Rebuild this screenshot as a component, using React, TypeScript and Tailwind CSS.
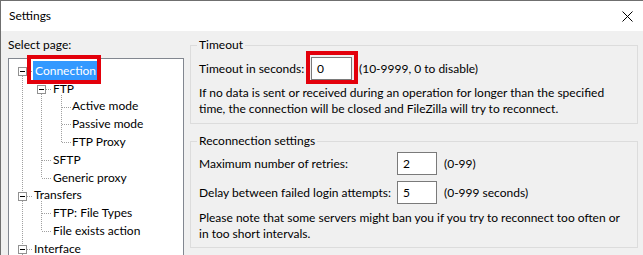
import React from "react"

type Node = { label: string; level: number; selected?: boolean }

const TREE: Node[] = [
  { label: "Connection", level: 0, selected: true },
  { label: "FTP", level: 1 },
  { label: "Active mode", level: 2 },
  { label: "Passive mode", level: 2 },
  { label: "FTP Proxy", level: 2 },
  { label: "SFTP", level: 1 },
  { label: "Generic proxy", level: 1 },
  { label: "Transfers", level: 0 },
  { label: "FTP: File Types", level: 1 },
  { label: "File exists action", level: 1 },
  { label: "Interface", level: 0 },
]

const INDENT = ["pl-[25px]", "pl-[44px]", "pl-[63px]"]

// row centre inside the tree box
const rc = (i: number) => 12 + 17.8 * i
const ry = (i: number) => Math.round(rc(i)) + 0.5

function TreeLines() {
  const dot = { stroke: "#a0a0a0", strokeDasharray: "1 1", strokeWidth: 1 }
  const vLines: [number, number, number][] = [
    [13.5, rc(0) + 5, rc(7) - 5],
    [13.5, rc(7) + 5, rc(10) - 5],
    [13.5, rc(10) + 5, 300],
    [32.5, rc(0) + 10, rc(1) - 5],
    [32.5, rc(1) + 5, rc(6)],
    [32.5, rc(7) + 5, rc(9)],
    [52.5, rc(1) + 6, rc(4)],
  ]
  const hLines: [number, number, number][] = [
    [0, 18, 24],
    [7, 18, 24],
    [10, 18, 24],
    [1, 37, 43],
    [5, 33, 43],
    [6, 33, 43],
    [8, 33, 43],
    [9, 33, 43],
    [2, 53, 62],
    [3, 53, 62],
    [4, 53, 62],
  ]
  const boxes: [number, number][] = [
    [0, 9.5],
    [7, 9.5],
    [10, 9.5],
    [1, 28.5],
  ]

  return (
    <svg
      className="pointer-events-none absolute inset-0"
      width="174"
      height="220"
      shapeRendering="crispEdges"
    >
      {vLines.map(([x, y1, y2], i) => (
        <line key={`v${i}`} x1={x} x2={x} y1={Math.round(y1)} y2={Math.round(y2)} {...dot} />
      ))}
      {hLines.map(([row, x1, x2], i) => (
        <line key={`h${i}`} x1={x1} x2={x2} y1={ry(row)} y2={ry(row)} {...dot} />
      ))}
      {boxes.map(([row, x]) => (
        <g key={`b${row}`}>
          <rect x={x} y={ry(row) - 4} width="8" height="8" fill="#fff" stroke="#919191" />
          <line x1={x + 1.5} x2={x + 6.5} y1={ry(row)} y2={ry(row)} stroke="#000" />
        </g>
      ))}
    </svg>
  )
}

function NumberBox({ value, width }: { value: string; width: string }) {
  return (
    <div className={`flex h-[23px] ${width} shrink-0 items-center border border-[#7a7a7a] bg-white pl-[5px]`}>
      {value}
    </div>
  )
}

export default function App() {
  return (
    <div className="relative h-[255px] w-[643px] overflow-hidden border-l border-t border-[#6f6f6f] bg-[#f0f0f0] font-['Lato',sans-serif] text-[12px] leading-[16px] text-black">
      {/* title bar */}
      <div className="flex h-[30px] items-center justify-between bg-white pl-[8px] pr-[10px]">
        <span>Settings</span>
        <svg width="11" height="11" viewBox="0 0 11 11">
          <path d="M0.5 0.5 L10.5 10.5 M10.5 0.5 L0.5 10.5" stroke="#000" strokeWidth="1" />
        </svg>
      </div>

      <div className="flex">
        {/* page list */}
        <div className="w-[183px] shrink-0 pl-[7px] pt-[6px]">
          <div>Select page:</div>
          <div className="relative mt-[5px] h-[220px] w-[176px] overflow-hidden border border-[#828790] bg-white">
            <TreeLines />
            <div className="relative pt-[3px]">
              {TREE.map((node) => (
                <div
                  key={node.label}
                  className={`flex h-[17.8px] items-center whitespace-nowrap ${INDENT[node.level]}`}
                >
                  {node.selected ? (
                    <span className="-ml-[1px] bg-[#3399ff] px-[2px] py-[2px] text-white">{node.label}</span>
                  ) : (
                    <span>{node.label}</span>
                  )}
                </div>
              ))}
            </div>
          </div>
        </div>

        {/* settings panel */}
        <div className="pl-[6px] pt-[6px]">
          <fieldset className="w-[448px] border border-[#dcdcdc] px-[8px] pb-[6px]">
            <legend className="-ml-[2px] px-[2px]">Timeout</legend>
            <div className="mt-[4px] flex h-[23px] items-center whitespace-nowrap">
              <span className="w-[112px] shrink-0">Timeout in seconds:</span>
              <NumberBox value="0" width="w-[41px]" />
              <span className="ml-[7px]">(10-9999, 0 to disable)</span>
            </div>
            <p className="mt-[5px] whitespace-nowrap">
              If no data is sent or received during an operation for longer than the specified
              <br />
              time, the connection will be closed and FileZilla will try to reconnect.
            </p>
          </fieldset>

          <fieldset className="mt-[9px] w-[448px] border border-[#dcdcdc] px-[8px] pb-[5px]">
            <legend className="-ml-[2px] px-[2px]">Reconnection settings</legend>
            <div className="mt-[3px] flex h-[23px] items-center whitespace-nowrap">
              <span className="w-[198px] shrink-0">Maximum number of retries:</span>
              <NumberBox value="2" width="w-[40px]" />
              <span className="ml-[7px]">(0-99)</span>
            </div>
            <div className="mt-[6px] flex h-[23px] items-center whitespace-nowrap">
              <span className="w-[198px] shrink-0">Delay between failed login attempts:</span>
              <NumberBox value="5" width="w-[40px]" />
              <span className="ml-[7px]">(0-999 seconds)</span>
            </div>
            <p className="mt-[6px] whitespace-nowrap">
              Please note that some servers might ban you if you try to reconnect too often or
              <br />
              in too short intervals.
            </p>
          </fieldset>
        </div>
      </div>

      {/* red annotation frames */}
      <div className="absolute left-[26px] top-[54px] h-[29px] w-[74px] border-[4px] border-[#e3000b]" />
      <div className="absolute left-[305px] top-[50px] h-[33px] w-[52px] border-[4px] border-[#e3000b]" />
    </div>
  )
}
